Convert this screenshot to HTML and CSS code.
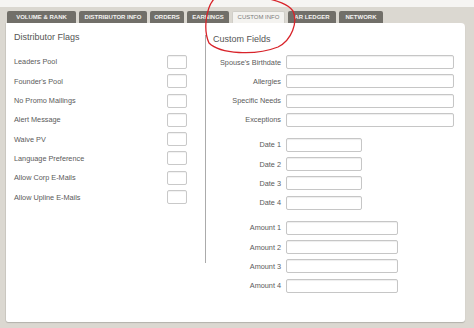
FILE: index.html
```html
<!DOCTYPE html>
<html>
<head>
<meta charset="utf-8">
<link rel="stylesheet" href="styles.css">
</head>
<body>
<div class="topstrip"></div>
<div class="page">
  <div class="tabs">
    <div class="tab t-vol">VOLUME &amp; RANK</div>
    <div class="tab t-dist">DISTRIBUTOR INFO</div>
    <div class="tab t-ord">ORDERS</div>
    <div class="tab t-earn">EARNINGS</div>
    <div class="tab tab-active t-cust">CUSTOM INFO</div>
    <div class="tab t-ar">AR LEDGER</div>
    <div class="tab t-net">NETWORK</div>
  </div>
  <div class="panel">
    <div class="flags">
      <div class="heading">Distributor Flags</div>
      <div class="flag-row"><span class="label">Leaders Pool</span><span class="box"></span></div>
      <div class="flag-row"><span class="label">Founder's Pool</span><span class="box"></span></div>
      <div class="flag-row"><span class="label">No Promo Mailings</span><span class="box"></span></div>
      <div class="flag-row"><span class="label">Alert Message</span><span class="box"></span></div>
      <div class="flag-row"><span class="label">Waive PV</span><span class="box"></span></div>
      <div class="flag-row"><span class="label">Language Preference</span><span class="box"></span></div>
      <div class="flag-row"><span class="label">Allow Corp E-Mails</span><span class="box"></span></div>
      <div class="flag-row"><span class="label">Allow Upline E-Mails</span><span class="box"></span></div>
    </div>
    <div class="divider"></div>
    <div class="fields">
      <div class="heading heading-right">Custom Fields</div>
      <div class="group">
        <div class="field-row"><span class="flabel">Spouse's Birthdate</span><span class="input wide"></span></div>
        <div class="field-row"><span class="flabel">Allergies</span><span class="input wide"></span></div>
        <div class="field-row"><span class="flabel">Specific Needs</span><span class="input wide"></span></div>
        <div class="field-row"><span class="flabel">Exceptions</span><span class="input wide"></span></div>
      </div>
      <div class="group">
        <div class="field-row"><span class="flabel">Date 1</span><span class="input date"></span></div>
        <div class="field-row"><span class="flabel">Date 2</span><span class="input date"></span></div>
        <div class="field-row"><span class="flabel">Date 3</span><span class="input date"></span></div>
        <div class="field-row"><span class="flabel">Date 4</span><span class="input date"></span></div>
      </div>
      <div class="group">
        <div class="field-row"><span class="flabel">Amount 1</span><span class="input amount"></span></div>
        <div class="field-row"><span class="flabel">Amount 2</span><span class="input amount"></span></div>
        <div class="field-row"><span class="flabel">Amount 3</span><span class="input amount"></span></div>
        <div class="field-row"><span class="flabel">Amount 4</span><span class="input amount"></span></div>
      </div>
    </div>
  </div>
</div>
<svg class="annotation" width="100" height="60" viewBox="0 0 100 60">
  <path d="M 14 -1 C 6 8, 3 30, 9 43 C 20 54, 55 56, 78 47 C 92 40, 98 22, 93 11 C 88 4, 78 1, 62 -3" fill="none" stroke="#d8232a" stroke-width="1.3" stroke-linecap="round"/>
</svg>
</body>
</html>
```
FILE: styles.css
```css
html, body {
  margin: 0;
  padding: 0;
}
body {
  width: 474px;
  height: 328px;
  overflow: hidden;
  background: #dbd8d1;
  font-family: "Liberation Sans", Arial, sans-serif;
  position: relative;
}
.topstrip {
  height: 7px;
  background: #f6f5f3;
}
.page {
  padding-left: 6px;
}
.tabs {
  display: flex;
  gap: 3px;
  padding-left: 1px;
  padding-top: 4px;
  height: 12px;
  align-items: flex-end;
}
.tab {
  height: 12px;
  line-height: 12px;
  background: #716f69;
  color: #f4f4f2;
  font-size: 6px;
  font-weight: bold;
  text-align: center;
  border-radius: 2px 2px 0 0;
  box-sizing: border-box;
  white-space: nowrap;
}
.t-vol { width: 69px; }
.t-dist { width: 68px; }
.t-ord { width: 34px; }
.t-earn { width: 42px; }
.t-cust { width: 53px; }
.t-ar { width: 48px; }
.t-net { width: 44px; }
.tab-active {
  background: #f4f3f0;
  color: #7a7a7a;
  font-weight: normal;
  border: 1px solid #d0cec8;
  border-bottom: none;
  line-height: 11px;
}
.panel {
  width: 459px;
  height: 299px;
  background: #ffffff;
  border-radius: 0 4px 3px 2px;
  box-shadow: 0 1px 1px rgba(0,0,0,0.18), -1px 0 0 rgba(0,0,0,0.06);
  display: flex;
  align-items: flex-start;
  box-sizing: border-box;
}
.heading {
  font-size: 9px;
  line-height: 11px;
  color: #555555;
  margin-bottom: 12px;
}
.flags {
  width: 173px;
  padding: 9px 18px 0 8px;
  display: flex;
  flex-direction: column;
  gap: 5.3px;
}
.flags .heading {
  margin-bottom: 6.7px;
}
.flag-row {
  display: flex;
  justify-content: space-between;
  align-items: center;
  height: 14px;
}
.label, .flabel {
  font-size: 7.3px;
  color: #5a5a5a;
}
.box {
  width: 20px;
  height: 14px;
  box-sizing: border-box;
  border: 1px solid #c9c9c9;
  border-radius: 2px;
  box-shadow: inset 0 1px 1px rgba(0,0,0,0.06);
}
.divider {
  width: 1px;
  height: 228px;
  margin-top: 12px;
  background: #ababab;
}
.fields {
  padding: 10.5px 0 0 7px;
}
.heading-right {
  margin-bottom: 10.5px;
}
.group {
  display: flex;
  flex-direction: column;
  gap: 5.3px;
  margin-bottom: 11px;
}
.field-row {
  display: flex;
  align-items: center;
  height: 14px;
}
.flabel {
  width: 68px;
  text-align: right;
  margin-right: 5px;
  white-space: nowrap;
}
.input {
  height: 14px;
  box-sizing: border-box;
  border: 1px solid #c6c6c6;
  border-radius: 2px;
  box-shadow: inset 0 1px 1px rgba(0,0,0,0.07);
}
.wide { width: 168px; }
.date { width: 76px; }
.amount { width: 112px; }
.annotation {
  position: absolute;
  left: 200px;
  top: 0;
  overflow: visible;
}
```
